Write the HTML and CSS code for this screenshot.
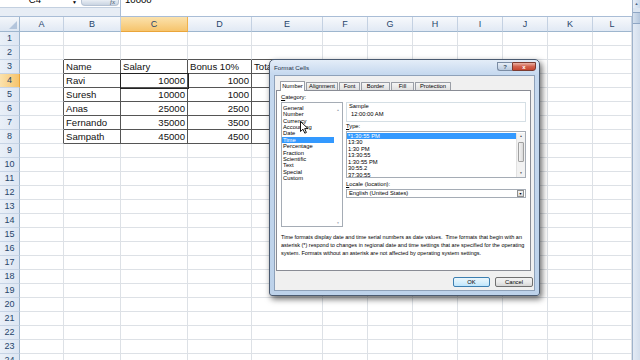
FILE: index.html
```html
<!DOCTYPE html>
<html>
<head>
    <title>Book1 - Format Cells</title>
    <link rel="stylesheet" href="styles.css">
</head>
<body>
    <div class="app">
        <div class="main">
            <div class="formula-bar">
                <div class="name-area">
                    <div class="name-row">
                        <div class="name-box"><span>C4</span></div>
                        <div class="name-drop">&#9660;</div>
                        <div class="fx-box"><span>fx</span></div>
                    </div>
                </div>
                <div class="formula"><span>10000</span></div>
            </div>
            <div class="sheet" id="sheet"></div>
        </div>
        <div class="vscroll">
            <div class="vs-top">&#9650;</div>
            <div class="vs-split"></div>
            <div class="vs-track"></div>
        </div>
    </div>

    <div class="dialog">
        <div class="dlg-title">
            <span class="title">Format Cells</span>
            <div class="caption-btns">
                <span class="help">?</span>
                <span class="close">x</span>
            </div>
        </div>
        <div class="dlg-client">
            <div class="tabs">
                <span class="tab active" style="width:25px">Number</span>
                <span class="tab" style="width:32px">Alignment</span>
                <span class="tab" style="width:21px">Font</span>
                <span class="tab" style="width:29px">Border</span>
                <span class="tab" style="width:23px">Fill</span>
                <span class="tab" style="width:36px">Protection</span>
            </div>
            <div class="panel">
                <div class="panel-top">
                    <div class="cat-col">
                        <div class="label"><u>C</u>ategory:</div>
                        <div class="listbox cat-list">
                            <div class="items">
                                <div>General</div>
                                <div>Number</div>
                                <div>Currency</div>
                                <div>Accounting</div>
                                <div>Date</div>
                                <div class="sel">Time</div>
                                <div>Percentage</div>
                                <div>Fraction</div>
                                <div>Scientific</div>
                                <div>Text</div>
                                <div>Special</div>
                                <div>Custom</div>
                            </div>
                            <div class="mini-scroll"><span>&#9650;</span><span>&#9660;</span></div>
                        </div>
                    </div>
                    <div class="right-col">
                        <div class="sample">
                            <div class="sample-label">Sample</div>
                            <div class="sample-value">12:00:00 AM</div>
                        </div>
                        <div class="label type-label"><u>T</u>ype:</div>
                        <div class="listbox type-list">
                            <div class="items">
                                <div class="sel">*1:30:55 PM</div>
                                <div>13:30</div>
                                <div>1:30 PM</div>
                                <div>13:30:55</div>
                                <div>1:30:55 PM</div>
                                <div>30:55.2</div>
                                <div>37:30:55</div>
                            </div>
                            <div class="type-scroll">
                                <span class="arrow">&#9650;</span>
                                <span class="thumb"></span>
                                <span class="arrow">&#9660;</span>
                            </div>
                        </div>
                        <div class="label locale-label"><u>L</u>ocale (location):</div>
                        <div class="combo">
                            <span>English (United States)</span>
                            <span class="combo-btn">&#9660;</span>
                        </div>
                    </div>
                </div>
                <p class="desc">
                    <span>Time formats display date and time serial numbers as date values.&nbsp; Time formats that begin with an</span>
                    <span>asterisk (*) respond to changes in regional date and time settings that are specified for the operating</span>
                    <span>system. Formats without an asterisk are not affected by operating system settings.</span>
                </p>
            </div>
            <div class="dlg-buttons">
                <button class="btn default">OK</button>
                <button class="btn">Cancel</button>
            </div>
        </div>
    </div>

    <svg class="cursor" width="9" height="13" viewBox="0 0 9 13">
        <path d="M0.5 0.5 L0.5 10.5 L3 8.2 L4.8 12.2 L6.4 11.5 L4.7 7.6 L8 7.6 Z" fill="#fff" stroke="#000" stroke-width="0.9" stroke-linejoin="round"/>
    </svg>

    <script>
        var cols = ['A', 'B', 'C', 'D', 'E', 'F', 'G', 'H', 'I', 'J', 'K', 'L'];
        var data = {
            3: ['', 'Name', 'Salary', 'Bonus 10%', 'Total'],
            4: ['', 'Ravi', 10000, 1000, ''],
            5: ['', 'Suresh', 10000, 1000, ''],
            6: ['', 'Anas', 25000, 2500, ''],
            7: ['', 'Fernando', 35000, 3500, ''],
            8: ['', 'Sampath', 45000, 4500, '']
        };

        var html = '<div class="corner"><span></span></div>';
        cols.forEach(function(c) {
            html += '<div class="ch' + (c === 'C' ? ' sel' : '') + '">' + c + '</div>';
        });

        for (var r = 1; r <= 24; r++) {
            html += '<div class="rh' + (r === 4 ? ' sel' : '') + '">' + r + '</div>';
            for (var i = 0; i < cols.length; i++) {
                var cls = 'c';
                var val = data[r] && data[r][i] !== undefined ? data[r][i] : '';
                if (typeof val === 'number') cls += ' n';
                if (r >= 3 && r <= 8 && i >= 1 && i <= 4) cls += ' bb br';
                if (r === 2 && i >= 1 && i <= 4) cls += ' bb';
                if (r >= 3 && r <= 8 && i === 0) cls += ' br';
                if (r === 4 && i === 2) cls += ' active';
                html += '<div class="' + cls + '">' + val + '</div>';
            }
        }
        document.getElementById('sheet').innerHTML = html;
    </script>
</body>
</html>
```

FILE: styles.css
```css
body {
    margin: 0;
    width: 640px;
    height: 360px;
    overflow: hidden;
    font-family: "Liberation Sans", Arial, sans-serif;
    background: #fff;
    position: relative;
}
.app {
    display: flex;
    height: 360px;
}
.main {
    width: 632px;
    display: flex;
    flex-direction: column;
}

/* formula bar */
.formula-bar {
    height: 16px;
    display: flex;
    border-bottom: 1px solid #a9bdd6;
    font-size: 9.6px;
}
.name-area {
    width: 120px;
    border-right: 1px solid #a9bdd6;
    background: #e7edf5;
}
.name-row {
    display: flex;
    height: 7px;
    background: #fff;
    border-bottom: 1px solid #c3d0e0;
}
.name-box {
    width: 70px;
    height: 7px;
    overflow: hidden;
    text-align: center;
}
.name-box span,
.formula span {
    display: block;
    line-height: 12px;
    margin-top: -6px;
}
.name-drop {
    width: 9px;
    font-size: 5px;
    line-height: 5px;
    text-align: center;
}
.fx-box {
    width: 38px;
    height: 6px;
    margin-left: 2px;
    border-radius: 0 0 4px 4px;
    background: linear-gradient(#e9eef4, #c9d4e2);
    border: 1px solid #b6c3d4;
    border-top: none;
    text-align: right;
    font-family: "Liberation Serif", serif;
    font-style: italic;
    font-size: 7px;
    line-height: 5px;
    padding-right: 3px;
    box-sizing: border-box;
    color: #4c5d74;
}
.formula {
    flex: 1;
    height: 7px;
    overflow: hidden;
    padding-left: 4px;
}

/* grid */
.sheet {
    display: grid;
    grid-template-columns: 20px 44px 57px 67px 64px 71px 45px 45px 45px 45px 45px 45px 39px;
    grid-template-rows: 15px;
    grid-auto-rows: 14px;
    overflow: hidden;
}
.corner {
    background: linear-gradient(#f3f6fa, #dde6f2);
    border-right: 1px solid #9eb6ce;
    border-bottom: 1px solid #9eb6ce;
    position: relative;
}
.corner span {
    position: absolute;
    right: 2px;
    bottom: 2px;
    width: 0;
    height: 0;
    border-left: 8px solid transparent;
    border-bottom: 8px solid #b3c5dc;
}
.ch {
    background: linear-gradient(#f7f9fc, #e1e9f4);
    border-right: 1px solid #c4d1e2;
    border-bottom: 1px solid #9eb6ce;
    text-align: center;
    font-size: 9px;
    line-height: 14px;
    color: #27456b;
}
.ch.sel {
    background: linear-gradient(#fbe2ad, #f6c46c);
    border-right-color: #f0b24c;
    border-bottom-color: #eaa53a;
}
.rh {
    background: linear-gradient(90deg, #eaf0f8, #dde6f3);
    border-right: 1px solid #9eb6ce;
    border-bottom: 1px solid #c7d4e5;
    text-align: center;
    font-size: 9px;
    line-height: 13px;
    color: #27456b;
}
.rh.sel {
    background: linear-gradient(90deg, #fbe2ad, #f6c46c);
    border-right-color: #eaa53a;
}
.c {
    border-right: 1px solid #dde1e6;
    border-bottom: 1px solid #dde1e6;
    font-size: 9.6px;
    line-height: 13px;
    padding: 0 2px;
    white-space: nowrap;
    color: #111;
}
.c.n {
    text-align: right;
}
.c.bb {
    border-bottom-color: #555;
}
.c.br {
    border-right-color: #555;
}
.c.active {
    position: relative;
    z-index: 1;
    outline: 1px solid #222;
}

/* right scrollbar */
.vscroll {
    width: 8px;
    display: flex;
    flex-direction: column;
    background: #dbe5f1;
    border-left: 1px solid #9fb3cb;
    box-sizing: border-box;
}
.vs-top {
    height: 8px;
    font-size: 4px;
    line-height: 8px;
    text-align: center;
    color: #4a6284;
    background: linear-gradient(90deg, #e8eff8, #c9d8ea);
}
.vs-split {
    height: 10px;
    margin-top: 4px;
    background: linear-gradient(90deg, #d4e0ee, #b3c6dd);
    border-top: 1px solid #8ea6c4;
    border-bottom: 1px solid #8ea6c4;
}
.vs-track {
    flex: 1;
    background: linear-gradient(90deg, #e3ebf5, #d3deec);
}

/* dialog */
.dialog {
    position: absolute;
    left: 269px;
    top: 59px;
    width: 271px;
    height: 237px;
    box-sizing: border-box;
    border: 1px solid #4a5a70;
    border-radius: 5px 5px 3px 3px;
    background: linear-gradient(#e4edf8, #c6d9ef 14px, #bdd2ea);
    padding: 0 4px 4px 4px;
    display: flex;
    flex-direction: column;
    box-shadow: 2px 3px 6px rgba(0, 0, 0, 0.6);
    font-size: 5.8px;
    color: #000;
    z-index: 5;
}
.dlg-title {
    height: 16px;
    display: flex;
    justify-content: space-between;
    align-items: flex-start;
}
.dlg-title .title {
    margin-top: 4px;
    font-size: 6.2px;
    color: #1d3048;
}
.caption-btns {
    display: flex;
    margin-top: 2px;
    margin-right: -1px;
}
.caption-btns span {
    height: 9px;
    box-sizing: border-box;
    text-align: center;
    font-size: 6px;
    line-height: 8px;
    font-weight: bold;
}
.help {
    width: 15px;
    border: 1px solid #7a8ca4;
    border-right: none;
    border-radius: 0 0 0 3px;
    background: linear-gradient(#e6edf6, #b9cade);
    color: #3d4f66;
}
.close {
    width: 24px;
    border: 1px solid #7a3a30;
    border-radius: 0 0 3px 0;
    background: linear-gradient(#eab2a6, #d2634e 50%, #c64630);
    color: #fff;
}
.dlg-client {
    flex: 1;
    background: #f0f0f0;
    border: 1px solid #8ea1b9;
    padding: 5px 3px 3px 1px;
    display: flex;
    flex-direction: column;
}
.tabs {
    display: flex;
    align-items: flex-end;
    gap: 1px;
    height: 9px;
    margin-left: 4px;
    position: relative;
    z-index: 1;
}
.tab {
    height: 8px;
    box-sizing: border-box;
    border: 1px solid #9a9ea6;
    border-bottom: none;
    border-radius: 1px 1px 0 0;
    background: linear-gradient(#f5f5f5, #e0e0e0);
    text-align: center;
    line-height: 7px;
    font-size: 5.8px;
}
.tab.active {
    height: 10px;
    margin-bottom: -1px;
    background: #fff;
    line-height: 9px;
}
.panel {
    height: 181px;
    box-sizing: border-box;
    border: 1px solid #898c95;
    background: #fff;
    padding: 3px 4px 0 4px;
}
.panel-top {
    display: grid;
    grid-template-columns: 62px 1fr;
    column-gap: 3px;
}
.label {
    line-height: 7px;
    height: 7px;
}
.listbox {
    border: 1px solid #a5acb5;
    background: #fff;
    box-sizing: border-box;
    display: flex;
}
.listbox .items {
    flex: 1;
    line-height: 6.36px;
}
.listbox .items div {
    padding-left: 1px;
    white-space: nowrap;
}
.listbox .items div.sel {
    background: #3399ff;
    color: #fff;
}
.cat-list {
    margin-top: 1px;
    height: 125px;
    padding-top: 2px;
}
.mini-scroll {
    width: 8px;
    display: flex;
    flex-direction: column;
    justify-content: space-between;
    font-size: 3px;
    color: #9aa3ad;
    text-align: center;
    padding: 3px 0 1px;
}
.sample {
    margin-top: 8px;
    border: 1px solid #d5dfe5;
    padding: 0 2px 2px 2px;
}
.sample-label {
    line-height: 7px;
}
.sample-value {
    line-height: 9px;
    padding-left: 2px;
}
.type-label {
    margin-top: 1px;
}
.type-list {
    margin-top: 1px;
    height: 47px;
    padding-top: 0.5px;
}
.type-list .items {
    line-height: 6.5px;
}
.type-scroll {
    width: 8px;
    display: flex;
    flex-direction: column;
    align-items: center;
    font-size: 3px;
    color: #444;
    background: #f2f2f2;
    border-left: 1px solid #e2e2e2;
}
.type-scroll .arrow {
    height: 7px;
    line-height: 7px;
}
.type-scroll .thumb {
    width: 6px;
    height: 20px;
    margin: 2px 0 auto;
    border: 1px solid #a0a0a0;
    border-radius: 1px;
    background: linear-gradient(90deg, #f4f4f4, #dadada);
    box-sizing: border-box;
}
.locale-label {
    margin-top: 2.5px;
}
.combo {
    margin-top: 1px;
    height: 9px;
    border: 1px solid #a5acb5;
    box-sizing: border-box;
    display: flex;
    justify-content: space-between;
    align-items: center;
    padding-left: 2px;
    background: #fff;
}
.combo-btn {
    width: 7px;
    height: 7px;
    margin-right: 1px;
    font-size: 3.5px;
    line-height: 7px;
    text-align: center;
    background: linear-gradient(#f3f3f3, #d9d9d9);
    border: 1px solid #8e8f8f;
    box-sizing: border-box;
}
.desc {
    margin: 6px 0 0 0;
    font-size: 5.5px;
    line-height: 8px;
    color: #000;
}
.desc span {
    display: block;
    white-space: nowrap;
}
.dlg-buttons {
    display: flex;
    justify-content: flex-end;
    gap: 5px;
    margin-top: 6px;
    margin-right: -2px;
}
.btn {
    width: 38px;
    height: 10px;
    padding: 0;
    font-family: "Liberation Sans", Arial, sans-serif;
    font-size: 5.8px;
    line-height: 8px;
    border: 1px solid #707070;
    border-radius: 2px;
    background: linear-gradient(#f2f2f2, #ebebeb 50%, #d6d6d6);
    color: #000;
}
.btn.default {
    width: 37px;
    border-color: #3c7fb1;
    background: linear-gradient(#eaf6fd, #d9f0fc 50%, #bee6fd);
}
.cursor {
    position: absolute;
    left: 300px;
    top: 121px;
    z-index: 10;
}
```
